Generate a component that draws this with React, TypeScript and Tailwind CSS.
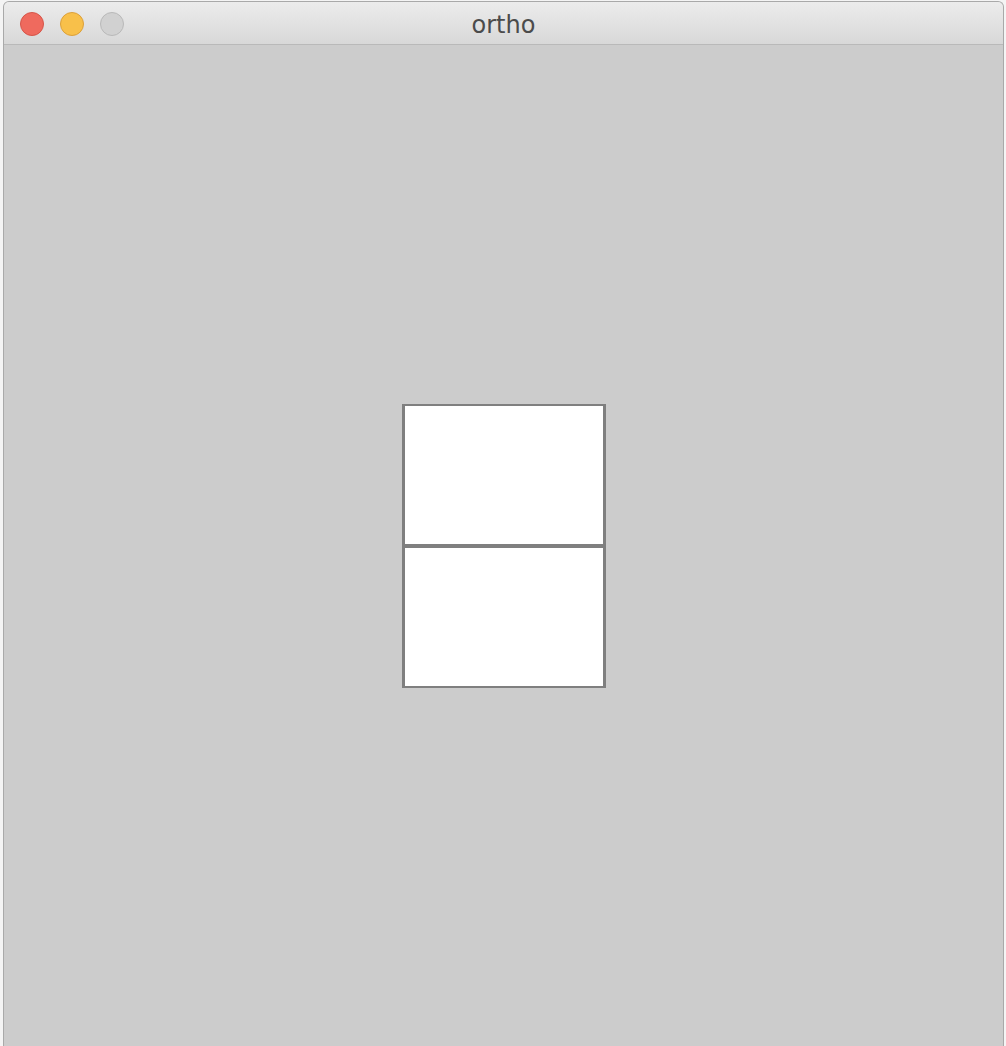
import React from "react";

export default function App() {
  return (
    <div className="w-[1006px] h-[1046px] bg-[#f4f4f4] overflow-hidden pt-[1px] pl-[3px]">
      <div className="w-[1001px] h-[1045px] flex flex-col rounded-t-[6px] border border-b-0 border-[#a9a9a9] overflow-hidden bg-[#cccccc]">
        <div className="relative h-[43px] shrink-0 bg-gradient-to-b from-[#ececec] to-[#d8d8d8] border-b border-[#b9b9b9] flex items-center">
          <div className="flex items-center gap-[16px] pl-[16px] pt-[1px]">
            <div className="w-[24px] h-[24px] rounded-full bg-[#ef6a5e] border border-[#d65549]" />
            <div className="w-[24px] h-[24px] rounded-full bg-[#f8c04a] border border-[#dca03a]" />
            <div className="w-[24px] h-[24px] rounded-full bg-[#d1d1d1] border border-[#b9b9b9]" />
          </div>
          <div
            className="absolute inset-0 flex items-center justify-center text-[24px] text-[#4b4b4b] pt-[4px]"
            style={{ fontFamily: '"DejaVu Sans", sans-serif' }}
          >
            ortho
          </div>
        </div>
        <div className="flex-1 flex items-center justify-center">
          <div className="flex flex-col w-[204px] ml-[1px]">
            <div className="h-[142px] bg-white border-l-[3px] border-r-[3px] border-t-[2px] border-b-[2px] border-[#7f7f7f]" />
            <div className="h-[142px] bg-white border-l-[3px] border-r-[3px] border-t-[2px] border-b-[2px] border-[#7f7f7f]" />
          </div>
        </div>
      </div>
    </div>
  );
}
